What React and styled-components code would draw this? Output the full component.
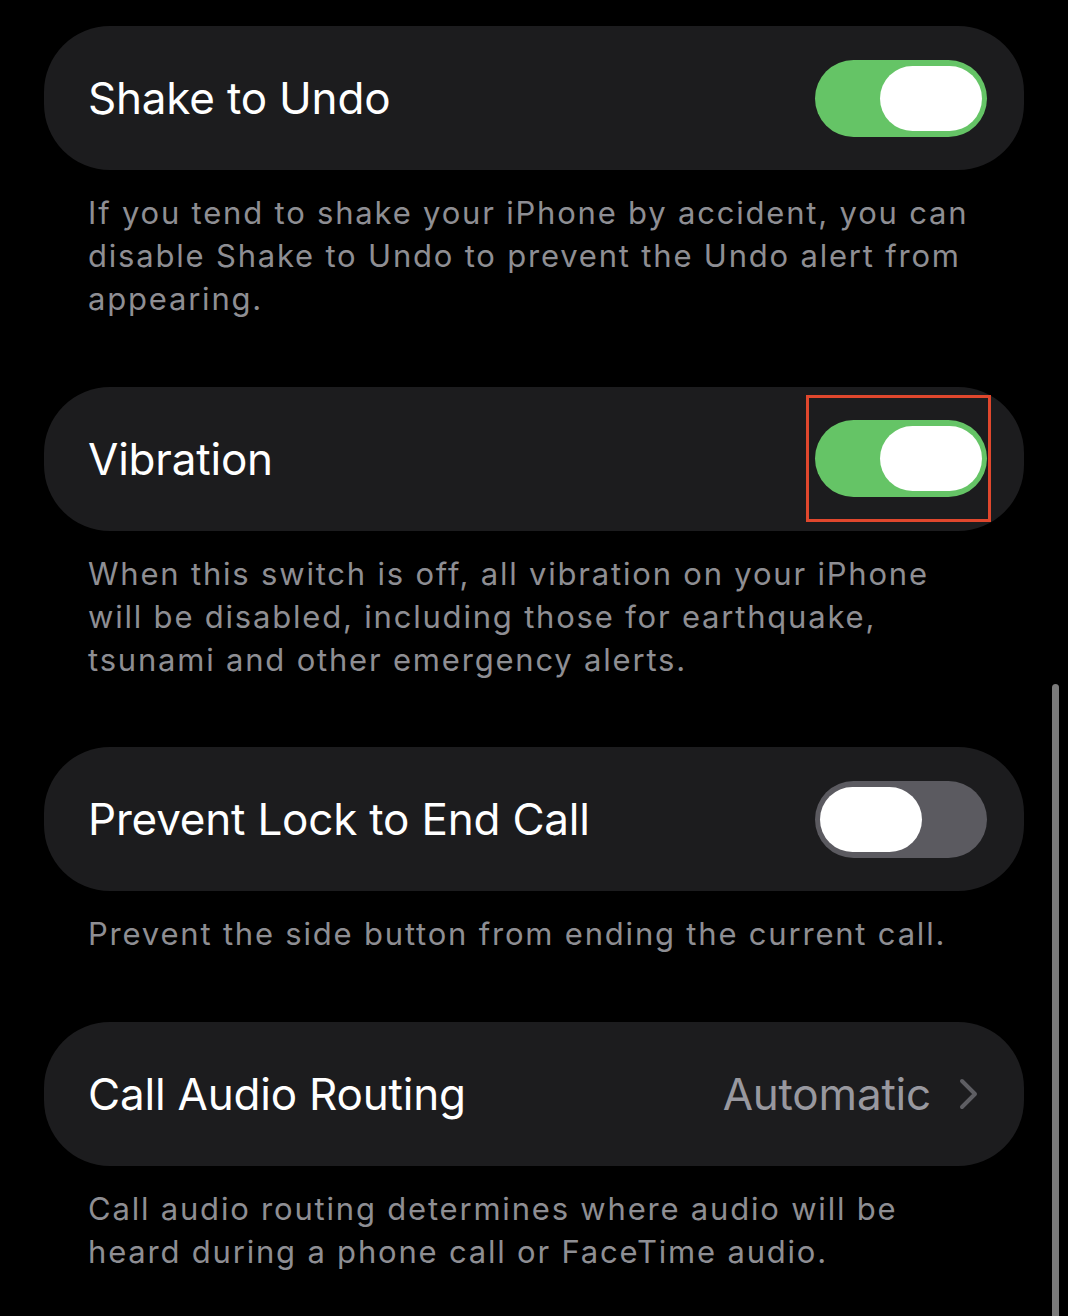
import React from 'react';
import styled, { createGlobalStyle } from 'styled-components';

const GlobalStyle = createGlobalStyle`
  html, body {
    margin: 0;
    padding: 0;
    background: #000;
  }
  body {
    font-family: Inter, "Noto Sans", "Liberation Sans", sans-serif;
    -webkit-font-smoothing: antialiased;
  }
`;

const Page = styled.div`
  position: relative;
  width: 1068px;
  height: 1316px;
  overflow: hidden;
  background: #000;
  padding: 26px 44px 0 44px;
  box-sizing: border-box;
`;

const Card = styled.div`
  display: flex;
  align-items: center;
  justify-content: space-between;
  height: 144px;
  box-sizing: border-box;
  padding: 0 37px 0 44px;
  background: #1c1c1e;
  border-radius: 66px;
`;

const Title = styled.span`
  color: #fff;
  font-size: 44px;
  font-weight: 400;
  letter-spacing: -0.2px;
`;

const Footer = styled.p`
  margin: 0;
  padding: 21px 44px 66.5px 44px;
  color: #8e8e93;
  font-size: 31px;
  line-height: 43px;
  letter-spacing: 1.8px;
`;

const Track = styled.div`
  position: relative;
  display: flex;
  justify-content: ${(p) => (p.$on ? 'flex-end' : 'flex-start')};
  align-items: center;
  width: 172px;
  height: 77px;
  padding: 0 5px;
  box-sizing: border-box;
  border-radius: 39px;
  background: ${(p) => (p.$on ? '#65c466' : '#5b5a60')};
`;

const Knob = styled.div`
  width: 102px;
  height: 65px;
  border-radius: 33px;
  background: #fff;
`;

const Highlight = styled.div`
  position: relative;

  &::after {
    content: '';
    position: absolute;
    left: -9px;
    right: -4px;
    top: -25px;
    bottom: -25px;
    border: 3px solid #e0472d;
  }
`;

const Value = styled.div`
  display: flex;
  align-items: center;
  gap: 28px;
  color: #98989f;
  font-size: 44px;
  letter-spacing: -0.2px;
  margin-right: 8px;
`;

const ScrollBar = styled.div`
  position: absolute;
  right: 9px;
  top: 684px;
  width: 7px;
  height: 660px;
  border-radius: 4px;
  background: #7b7b7b;
`;

function Toggle({ on }) {
  return (
    <Track $on={on}>
      <Knob />
    </Track>
  );
}

function Chevron() {
  return (
    <svg width="20" height="32" viewBox="0 0 20 32">
      <path
        d="M3 3 L16 16 L3 29"
        fill="none"
        stroke="#5e5e63"
        strokeWidth="4"
        strokeLinecap="round"
        strokeLinejoin="round"
      />
    </svg>
  );
}

export default function App() {
  return (
    <React.Fragment>
      <GlobalStyle />
      <Page>
        <Card>
          <Title>Shake to Undo</Title>
          <Toggle on />
        </Card>
        <Footer>
          If you tend to shake your iPhone by accident, you can disable Shake
          to Undo to prevent the Undo alert from appearing.
        </Footer>

        <Card>
          <Title>Vibration</Title>
          <Highlight>
            <Toggle on />
          </Highlight>
        </Card>
        <Footer>
          When this switch is off, all vibration on your iPhone will be
          disabled, including those for earthquake, tsunami and other emergency
          alerts.
        </Footer>

        <Card>
          <Title>Prevent Lock to End Call</Title>
          <Toggle on={false} />
        </Card>
        <Footer>Prevent the side button from ending the current call.</Footer>

        <Card>
          <Title>Call Audio Routing</Title>
          <Value>
            Automatic
            <Chevron />
          </Value>
        </Card>
        <Footer>
          Call audio routing determines where audio will be heard during a
          phone call or FaceTime audio.
        </Footer>
        <ScrollBar />
      </Page>
    </React.Fragment>
  );
}
